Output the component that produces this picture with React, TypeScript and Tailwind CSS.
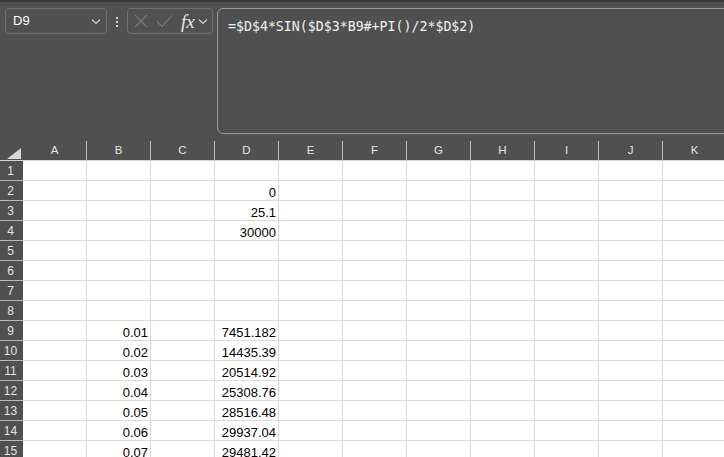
import React from "react";

const COLS = ["A", "B", "C", "D", "E", "F", "G", "H", "I", "J", "K"];

// row -> column -> value
const DATA: Record<number, Record<string, string>> = {
	2: { D: "0" },
	3: { D: "25.1" },
	4: { D: "30000" },
	9: { B: "0.01", D: "7451.182" },
	10: { B: "0.02", D: "14435.39" },
	11: { B: "0.03", D: "20514.92" },
	12: { B: "0.04", D: "25308.76" },
	13: { B: "0.05", D: "28516.48" },
	14: { B: "0.06", D: "29937.04" },
	15: { B: "0.07", D: "29481.42" },
};

const ROWS = Array.from({ length: 15 }, (_, i) => i + 1);

function Chevron({ className = "" }: { className?: string }) {
	return (
		<svg width="12" height="12" viewBox="0 0 12 12" className={className}>
			<path d="M2 4.5 L6 8.5 L10 4.5" fill="none" stroke="#d4d4d4" strokeWidth="1.1" />
		</svg>
	);
}

function Toolbar() {
	return (
		<div className="flex h-[131px] pt-[6px]">
			{/* name box */}
			<div className="ml-[5px] flex h-[26px] w-[102px] items-center justify-between rounded-[4px] border border-[#6f6f6f] pl-[7px] pr-[4px]">
				<span className="text-[13px] text-white">D9</span>
				<Chevron />
			</div>
			{/* dots */}
			<div className="flex h-[26px] w-[20px] flex-col items-center justify-center gap-[2px] pt-[1px]">
				<span className="h-[2px] w-[2px] bg-[#d0d0d0]" />
				<span className="h-[2px] w-[2px] bg-[#d0d0d0]" />
				<span className="h-[2px] w-[2px] bg-[#d0d0d0]" />
			</div>
			{/* cancel / enter / fx */}
			<div className="flex h-[26px] w-[86px] items-center rounded-[4px] border border-[#6f6f6f] pl-[6px]">
				<svg width="14" height="14" viewBox="0 0 14 14">
					<path d="M1 1 L13 13 M13 1 L1 13" stroke="#7a7a7a" strokeWidth="1.1" />
				</svg>
				<svg width="17" height="14" viewBox="0 0 17 14" className="ml-[8px]">
					<path d="M1 7.5 L6 12.5 L16 1.5" fill="none" stroke="#7a7a7a" strokeWidth="1.1" />
				</svg>
				<span className="ml-[8px] font-['Liberation_Serif',serif] text-[19px] italic leading-none text-[#e6e6e6]">
					fx
				</span>
				<Chevron className="ml-[2px]" />
			</div>
			{/* formula */}
			<div className="-mr-[10px] ml-[4px] h-[126px] flex-1 rounded-tl-[6px] rounded-bl-[6px] border border-[#9a9a9a] pl-[10px] pt-[5px]">
				<span className="font-['DejaVu_Sans_Mono',monospace] text-[13.25px] leading-[18px] text-[#f0f0f0]">
					=$D$4*SIN($D$3*B9#+PI()/2*$D$2)
				</span>
			</div>
		</div>
	);
}

function Grid() {
	return (
		<div className="font-['Liberation_Sans',Arial,sans-serif]">
			{/* column headers */}
			<div className="flex h-[20px] border-b border-[#d4d4d4]">
				<div className="relative w-[23px] shrink-0">
					<svg width="14" height="11" viewBox="0 0 14 11" className="absolute left-[7px] top-[7px]">
						<path d="M14 0 L14 11 L0 11 Z" fill="#d8d8d8" />
					</svg>
				</div>
				{COLS.map((c) => (
					<div
						key={c}
						className="flex w-[64px] shrink-0 items-center justify-center border-r border-[#bdbdbd] text-[11.5px] text-[#e4e4e4]"
					>
						{c}
					</div>
				))}
			</div>
			{ROWS.map((r) => (
				<div key={r} className="flex h-[20px]">
					<div className="flex w-[23px] shrink-0 items-center justify-center border-b border-[#b8b8b8] pr-[2px] text-[12px] text-[#e4e4e4]">
						{r}
					</div>
					{COLS.map((c) => (
						<div
							key={c}
							className="flex w-[64px] shrink-0 items-end justify-end border-r border-b border-[#dadada] bg-white pr-[2px] text-[13px] leading-[15px] text-black"
						>
							{DATA[r]?.[c] ?? ""}
						</div>
					))}
				</div>
			))}
		</div>
	);
}

export default function App() {
	return (
		<div className="h-[457px] w-[724px] overflow-hidden bg-[#505050] font-['Liberation_Sans',Arial,sans-serif]">
			<div className="h-[2px] bg-[#3a3a3a]" />
			<Toolbar />
			<div className="h-[8px]" />
			<Grid />
		</div>
	);
}
